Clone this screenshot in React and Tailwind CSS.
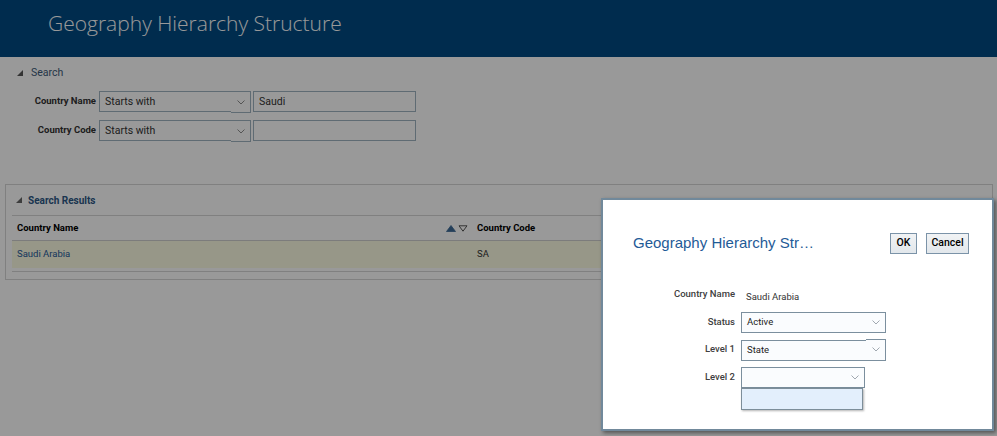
import React from 'react';

const Chevron = ({ className = '' }) => (
  <svg width="8" height="5" viewBox="0 0 8 5" className={className}>
    <path d="M0.5 0.5 L4 4 L7.5 0.5" fill="none" stroke="currentColor" strokeWidth="1" />
  </svg>
);

const Corner = ({ className = '' }) => (
  <svg width="6" height="6" viewBox="0 0 6 6" className={className}>
    <polygon points="6,0 6,6 0,6" fill="currentColor" />
  </svg>
);

// select used on the search form; the button segment drops 1px lower
const SearchSelect = ({ value }) => (
  <div className="flex items-start h-[22px] w-[152px]">
    <div className="flex-1 h-[21px] border border-r-0 border-[#9eb2c0] pl-[5px] flex items-center text-[10.5px] text-[#333]">
      {value}
    </div>
    <div className="w-[20px] h-[22px] border border-l-0 border-[#9eb2c0] flex items-center justify-center text-[#8c8c8c]">
      <Chevron />
    </div>
  </div>
);

const SearchRow = ({ label, value, className = '' }) => (
  <div className={`flex items-start ${className}`}>
    <div className="w-[80px] h-[21px] flex items-center justify-end text-[9.5px] font-bold text-[#333]">{label}</div>
    <div className="ml-[3px]">
      <SearchSelect value="Starts with" />
    </div>
    <div className="ml-[2px] w-[163px] h-[21px] border border-[#9eb2c0] pl-[5px] flex items-center text-[10.5px] text-[#333]">
      {value}
    </div>
  </div>
);

const DialogSelect = ({ value, width, raised }) => (
  <div className={`flex items-end ${raised ? 'h-[22px]' : 'h-[21px]'}`} style={{ width }}>
    <div className="flex-1 h-[21px] border border-r-0 border-[#7b8f9e] bg-[#fafcfe] pl-[5px] flex items-center text-[9.5px] text-[#222]">
      {value}
    </div>
    <div className={`w-[20px] ${raised ? 'h-[22px]' : 'h-[21px]'} border border-l-0 border-[#7b8f9e] bg-[#fafcfe] flex items-center justify-center text-[#a0a8b0]`}>
      <Chevron />
    </div>
  </div>
);

const FormRow = ({ label, children, className = '' }) => (
  <div className={`flex items-center ${className}`}>
    <div className="w-[132px] text-right text-[9.5px] font-medium text-[#404040]">{label}</div>
    <div className="ml-[6px]">{children}</div>
  </div>
);

export default function App() {
  return (
    <div className="relative w-[997px] h-[436px] overflow-hidden bg-white font-['Roboto',sans-serif]">
      <div className="h-[57px] bg-[#004a83] pl-[48px] pt-[9px]">
        <h1 className="font-['Open_Sans',sans-serif] font-light text-[21px] leading-[28px] text-white">
          Geography Hierarchy Structure
        </h1>
      </div>

      <div className="pl-[17px] pt-[9px] flex items-center h-[23px]">
        <Corner className="text-[#555]" />
        <span className="ml-[8px] text-[10.5px] text-[#3d5a78]">Search</span>
      </div>

      <div className="pl-[16px] mt-[11px]">
        <SearchRow label="Country Name" value="Saudi" />
        <SearchRow label="Country Code" value="" className="mt-[7px]" />
      </div>

      <div className="ml-[5px] mt-[42px] w-[988px] h-[96px] border border-[#d5d5d5]">
        <div className="h-[30px] pl-[10px] flex items-center">
          <Corner className="text-[#666]" />
          <span className="ml-[6px] text-[10px] font-bold text-[#2d5885]">Search Results</span>
        </div>
        <div className="mx-[6px] border-t border-[#d5d5d5]">
          <div className="flex h-[25px] border-b border-[#cfcfcf] text-[9.5px] font-bold text-black">
            <div className="w-[460px] pl-[5px] pr-[4px] flex items-center justify-between">
              <span>Country Name</span>
              <span className="flex items-center gap-[2px]">
                <svg width="10" height="7" viewBox="0 0 10 7">
                  <polygon points="5,0.5 9.5,6.5 0.5,6.5" fill="#3d6a96" stroke="#3d6a96" strokeWidth="0.8" />
                </svg>
                <svg width="10" height="7" viewBox="0 0 10 7">
                  <polygon points="1,0.8 9,0.8 5,6.2" fill="none" stroke="#555" strokeWidth="1" />
                </svg>
              </span>
            </div>
            <div className="pl-[5px] flex items-center">Country Code</div>
          </div>
          <div className="flex h-[27px] bg-[#fcfce3] text-[9.5px]">
            <div className="w-[460px] pl-[5px] flex items-center text-[#1f5b99]">Saudi Arabia</div>
            <div className="pl-[5px] flex items-center text-[#333]">SA</div>
          </div>
          <div className="mt-[3px] border-t border-[#d5d5d5]" />
        </div>
      </div>

      <div className="absolute inset-0 bg-black/40" />

      <div className="absolute left-[601px] top-[198px] w-[393px] h-[233px] border-2 border-[#71899b] bg-white shadow-[2px_2px_4px_rgba(0,0,0,0.45)]">
        <div className="flex items-center mt-[32px] pl-[30px] pr-[23px]">
          <div className="flex-1 font-['Liberation_Sans',sans-serif] text-[15px] text-[#1f5b97]">
            Geography Hierarchy Str…
          </div>
          <button className="w-[27px] h-[21px] border border-[#7b93a8] bg-gradient-to-b from-[#f1f3f5] to-[#e2e7eb] text-[10.5px] font-medium text-black">
            OK
          </button>
          <button className="ml-[9px] w-[43px] h-[21px] border border-[#7b93a8] bg-gradient-to-b from-[#f1f3f5] to-[#e2e7eb] text-[10.5px] font-medium text-black">
            Cancel
          </button>
        </div>

        <FormRow label="Country Name" className="mt-[33px] h-[14px]">
          <span className="pl-[5px] text-[9.5px] text-[#333]">Saudi Arabia</span>
        </FormRow>
        <FormRow label="Status" className="mt-[10px]">
          <DialogSelect value="Active" width="145px" />
        </FormRow>
        <FormRow label="Level 1" className="mt-[6px]">
          <DialogSelect value="State" width="145px" raised />
        </FormRow>
        <FormRow label="Level 2" className="mt-[6px]">
          <div className="relative">
            <DialogSelect value="" width="124px" />
            <div className="absolute left-0 top-full w-[122px] h-[22px] border border-[#7d8e9a] bg-[#e3effc] shadow-[1px_1px_2px_rgba(0,0,0,0.3)]" />
          </div>
        </FormRow>
      </div>
    </div>
  );
}
